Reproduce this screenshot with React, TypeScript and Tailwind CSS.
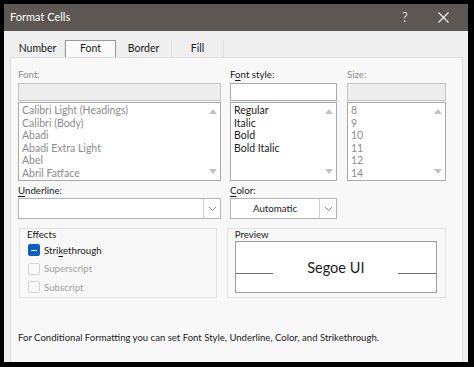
import React from 'react';

const FONT = { fontFamily: 'Lato, "Noto Sans", sans-serif' };

const fonts = ['Calibri Light (Headings)', 'Calibri (Body)', 'Abadi', 'Abadi Extra Light', 'Abel', 'Abril Fatface'];
const styles = ['Regular', 'Italic', 'Bold', 'Bold Italic'];
const sizes = ['8', '9', '10', '11', '12', '14'];

function ScrollArrows() {
  return (
    <div className="flex w-[14px] flex-col items-center justify-between py-[6px]">
      <svg width="8" height="5" viewBox="0 0 8 5">
        <path d="M0 5 L4 0 L8 5 Z" fill="#c2c2c2" />
      </svg>
      <svg width="8" height="5" viewBox="0 0 8 5">
        <path d="M0 0 L4 5 L8 0 Z" fill="#c2c2c2" />
      </svg>
    </div>
  );
}

function ListBox({ items, muted }: { items: string[]; muted?: boolean }) {
  return (
    <div className="flex h-[79px] border border-[#a9a9a9] bg-white">
      <div className={`flex-1 pl-[3px] pt-[1px] text-[10.5px] ${muted ? 'text-[#8c8c8c]' : 'text-[#1a1a1a]'}`}>
        {items.map((it) => (
          <div key={it} className="h-[12.6px] leading-[12.6px]">
            {it}
          </div>
        ))}
      </div>
      <ScrollArrows />
    </div>
  );
}

function Chevron() {
  return (
    <svg width="9" height="6" viewBox="0 0 9 6">
      <path d="M1 1 L4.5 4.5 L8 1" fill="none" stroke="#8a8a8a" strokeWidth="1" />
    </svg>
  );
}

function Dropdown({ value, width }: { value?: string; width: string }) {
  return (
    <div className={`flex h-[21px] ${width} border border-[#b4b4b4] bg-white`}>
      <div className="flex flex-1 items-center justify-center text-[#1a1a1a]">{value}</div>
      <div className="flex w-[17px] items-center justify-center border-l border-[#d0d0d0]">
        <Chevron />
      </div>
    </div>
  );
}

function Check({ label, checked, disabled, mnemonic }: { label: string; checked?: boolean; disabled?: boolean; mnemonic?: number }) {
  return (
    <div className="flex h-[18.5px] items-center gap-[4px]">
      {checked ? (
        <div className="flex h-[12px] w-[12px] items-center justify-center rounded-[2px] bg-[#0a5fc4]">
          <div className="h-[1.5px] w-[6px] bg-white" />
        </div>
      ) : (
        <div className="h-[12px] w-[12px] rounded-[2px] border border-[#d4d4d4] bg-[#f8f8f8]" />
      )}
      <span className={disabled ? 'text-[#a0a0a0]' : 'text-[#1a1a1a]'}>
        {mnemonic !== undefined ? (
          <>
            {label.slice(0, mnemonic)}
            <span className="underline underline-offset-2">{label[mnemonic]}</span>
            {label.slice(mnemonic + 1)}
          </>
        ) : (
          label
        )}
      </span>
    </div>
  );
}

export default function App() {
  return (
    <div className="h-[367px] w-[474px] bg-black pb-[5px] pl-[4px] pr-[6px] pt-[4px] text-[9.7px]" style={FONT}>
      <div className="flex h-full flex-col bg-[#efefef]">
        {/* title bar */}
        <div className="flex h-[27px] items-center bg-[#5c5753] pl-[6px] text-white">
          <span className="flex-1 text-[11px]">Format Cells</span>
          <span className="w-[26px] text-center text-[13px] text-[#d8d6d4]">?</span>
          <div className="flex w-[50px] items-center justify-center">
            <svg width="11" height="11" viewBox="0 0 11 11">
              <path d="M0.5 0.5 L10.5 10.5 M10.5 0.5 L0.5 10.5" stroke="#f2f2f2" strokeWidth="1.2" />
            </svg>
          </div>
        </div>

        {/* tabs */}
        <div className="flex h-[26px] items-end pl-[7px] pr-[6px] text-[10.5px] text-[#1a1a1a]">
          <div className="flex h-[17px] w-[54px] items-center justify-center border-r border-[#e2e2e2]">Number</div>
          <div className="flex h-[17px] w-[51px] items-center justify-center border border-[#9a9a9a] border-b-0 bg-[#fafafa]">Font</div>
          <div className="flex h-[17px] w-[56px] items-center justify-center border-r border-[#e2e2e2]">Border</div>
          <div className="flex h-[17px] w-[52px] items-center justify-center border-r border-[#e2e2e2]">Fill</div>
        </div>

        {/* panel */}
        <div className="ml-[6px] mr-[5px] flex flex-1 flex-col border border-b-0 border-[#dedede] bg-[#f8f8f8] pl-[7px] pr-[16px] pt-[9px]">
          <div className="flex gap-[9px]">
            <div className="flex w-[203px] flex-col">
              <div className="h-[16px] text-[#8c8c8c]">Font:</div>
              <div className="h-[18px] border border-[#c4c4c4] bg-[#ededed]" />
              <div className="mt-[1px]">
                <ListBox items={fonts} muted />
              </div>
            </div>
            <div className="flex w-[107px] flex-col">
              <div className="h-[16px] text-[#1a1a1a]">
                F<span className="underline underline-offset-2">o</span>nt style:
              </div>
              <div className="h-[18px] border border-[#a9a9a9] bg-white" />
              <div className="mt-[1px]">
                <ListBox items={styles} />
              </div>
            </div>
            <div className="ml-[1px] flex w-[99px] flex-col">
              <div className="h-[16px] text-[#8c8c8c]">Size:</div>
              <div className="h-[18px] border border-[#c4c4c4] bg-[#ededed]" />
              <div className="mt-[1px]">
                <ListBox items={sizes} muted />
              </div>
            </div>
          </div>

          <div className="mt-[1px] flex gap-[9px]">
            <div className="flex w-[203px] flex-col">
              <div className="h-[16px] leading-[16px] text-[#1a1a1a]">
                <span className="underline underline-offset-2">U</span>nderline:
              </div>
              <Dropdown width="w-[203px]" />
            </div>
            <div className="flex w-[107px] flex-col">
              <div className="h-[16px] leading-[16px] text-[#1a1a1a]">
                <span className="underline underline-offset-2">C</span>olor:
              </div>
              <Dropdown width="w-[107px]" value="Automatic" />
            </div>
          </div>

          <div className="mt-[9px] flex gap-[10px]">
            <div className="ml-[1px] flex h-[70px] w-[202px] flex-col border border-[#e2e2e2] pl-[7px]">
              <div className="-mt-[2px] h-[14px] text-[#1a1a1a]">Effects</div>
              <div className="pl-[1px]">
                <Check label="Strikethrough" checked mnemonic={4} />
                <Check label="Superscript" disabled />
                <Check label="Subscript" disabled />
              </div>
            </div>
            <div className="flex h-[70px] w-[224px] flex-col border border-[#e2e2e2] px-[7px]">
              <div className="-mt-[2px] h-[14px] text-[#1a1a1a]">Preview</div>
              <div className="relative mr-[1px] flex h-[52px] items-center justify-center border border-[#9c9c9c] bg-white">
                <span className="absolute left-0 top-[31px] h-px w-[37px] bg-[#6e6e6e]" />
                <span className="absolute right-0 top-[31px] h-px w-[38px] bg-[#6e6e6e]" />
                <span className="pt-[2px] text-[14.5px] text-[#1a1a1a]">Segoe UI</span>
              </div>
            </div>
          </div>

          <div className="mt-[33px] text-[9.55px] text-[#1a1a1a]">
            For Conditional Formatting you can set Font Style, Underline, Color, and Strikethrough.
          </div>
        </div>
      </div>
    </div>
  );
}
